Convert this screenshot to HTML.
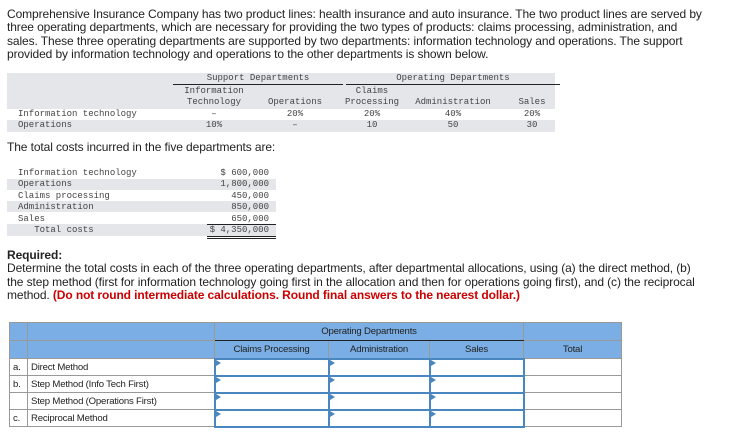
<!DOCTYPE html>
<html><head><meta charset="utf-8"><style>
body{margin:0;width:739px;height:435px;background:#fff;position:relative;overflow:hidden;font-family:"Liberation Sans",sans-serif;color:#222}
.p{position:absolute;left:7px;font-size:12px;line-height:13.3px;white-space:nowrap;letter-spacing:-0.1px}
.m{position:absolute;font-family:"Liberation Mono",monospace;font-size:9px;color:#444;white-space:nowrap;line-height:11px}
.band{position:absolute;background:#e4e6ea}
.c{text-align:center}
.r{text-align:right}
table.b{position:absolute;left:9px;top:322px;border-collapse:collapse;font-size:9.6px;letter-spacing:-0.2px}
table.b td{border:1px solid #999;padding:0 3px;height:17px;box-sizing:border-box}
.h{background:#7aaee4;text-align:center;color:#222}
.in{border:2px solid #4a86c0 !important;position:relative}
.in:before{content:"";position:absolute;left:0;top:0;border-left:5px solid #4a86c0;border-top:3px solid transparent;border-bottom:3px solid transparent}
</style></head><body>
<div class="p" style="top:8px">Comprehensive Insurance Company has two product lines: health insurance and auto insurance. The two product lines are served by<br>three operating departments, which are necessary for providing the two types of products: claims processing, administration, and<br>sales. These three operating departments are supported by two departments: information technology and operations. The support<br>provided by information technology and operations to the other departments is shown below.</div>

<div class="band" style="left:7px;top:73px;width:548px;height:36px"></div>
<div class="band" style="left:7px;top:120px;width:548px;height:12px"></div>
<div style="position:absolute;left:173px;top:84px;width:170px;height:1px;background:#222"></div>
<div style="position:absolute;left:346px;top:84px;width:214px;height:1px;background:#222"></div>
<div class="m c" style="left:173px;top:73px;width:170px">Support Departments</div>
<div class="m c" style="left:346px;top:73px;width:214px">Operating Departments</div>
<div class="m c" style="left:174px;top:86px;width:80px">Information<br>Technology</div>
<div class="m c" style="left:260px;top:97px;width:70px">Operations</div>
<div class="m c" style="left:336px;top:86px;width:72px">Claims<br>Processing</div>
<div class="m c" style="left:410px;top:97px;width:86px">Administration</div>
<div class="m c" style="left:510px;top:97px;width:44px">Sales</div>
<div class="m" style="left:18px;top:109px">Information technology<br>Operations</div>
<div class="m c" style="left:184px;top:109px;width:60px">–<br>10%</div>
<div class="m c" style="left:265px;top:109px;width:60px">20%<br>–</div>
<div class="m c" style="left:342px;top:109px;width:60px">20%<br>10</div>
<div class="m c" style="left:423px;top:109px;width:60px">40%<br>50</div>
<div class="m c" style="left:502px;top:109px;width:60px">20%<br>30</div>

<div class="p" style="top:141px;font-size:12px">The total costs incurred in the five departments are:</div>

<div class="band" style="left:7px;top:179px;width:269px;height:11px"></div>
<div class="band" style="left:7px;top:201px;width:269px;height:11px"></div>
<div class="band" style="left:7px;top:224px;width:269px;height:12px"></div>
<div class="m" style="left:18px;top:168px;line-height:11.4px">Information technology<br>Operations<br>Claims processing<br>Administration<br>Sales<br>&nbsp;&nbsp;&nbsp;Total costs</div>
<div class="m r" style="left:200px;top:168px;width:69px;line-height:11.4px">$ 600,000<br>1,800,000<br>450,000<br>850,000<br>650,000<br>$ 4,350,000</div>
<div style="position:absolute;left:207px;top:224px;width:69px;height:1px;background:#222"></div>
<div style="position:absolute;left:207px;top:236px;width:69px;height:3px;border-top:1px solid #222;border-bottom:1px solid #222;box-sizing:border-box"></div>

<div class="p" style="top:249px"><b>Required:</b><br>Determine the total costs in each of the three operating departments, after departmental allocations, using (a) the direct method, (b)<br>the step method (first for information technology going first in the allocation and then for operations going first), and (c) the reciprocal<br>method. <b style="color:#c00">(Do not round intermediate calculations. Round final answers to the nearest dollar.)</b></div>

<table class="b">
<tr style="height:18px"><td class="h" style="width:18px;height:18px"></td><td class="h" style="width:187px"></td><td class="h" colspan="3" style="border-bottom:1px solid #222">Operating Departments</td><td class="h" style="width:98px"></td></tr>
<tr style="height:18px"><td class="h" style="height:18px"></td><td class="h"></td><td class="h" style="width:114px">Claims Processing</td><td class="h" style="width:101px">Administration</td><td class="h" style="width:94px">Sales</td><td class="h">Total</td></tr>
<tr><td>a.</td><td>Direct Method</td><td class="in"></td><td class="in"></td><td class="in"></td><td></td></tr>
<tr><td>b.</td><td>Step Method (Info Tech First)</td><td class="in"></td><td class="in"></td><td class="in"></td><td></td></tr>
<tr><td></td><td>Step Method (Operations First)</td><td class="in"></td><td class="in"></td><td class="in"></td><td></td></tr>
<tr><td>c.</td><td>Reciprocal Method</td><td class="in"></td><td class="in"></td><td class="in"></td><td></td></tr>
</table>
</body></html>
